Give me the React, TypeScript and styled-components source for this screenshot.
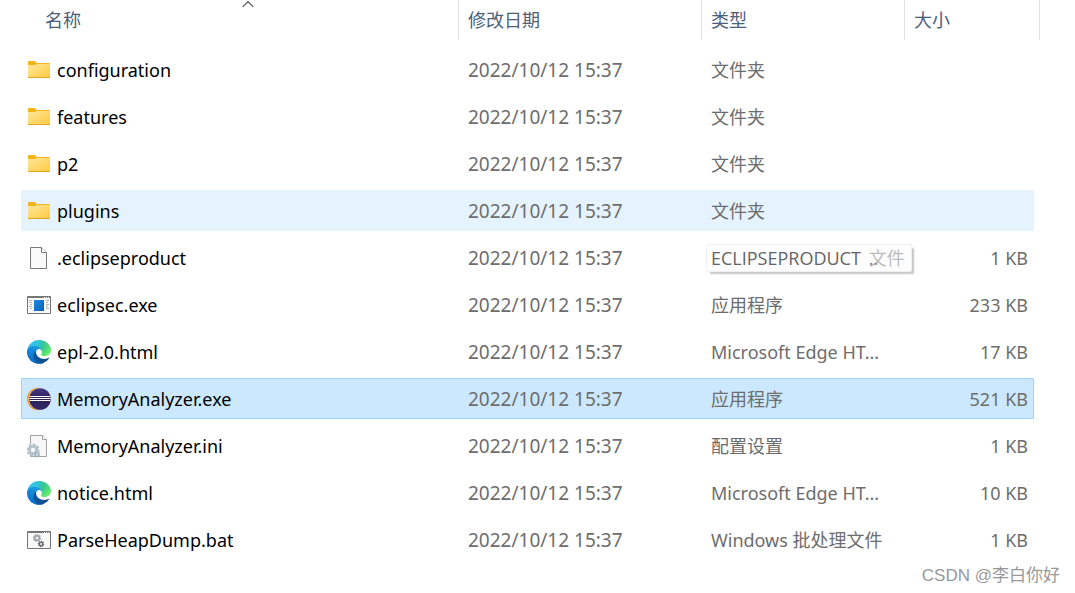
import React from "react";
import styled, { createGlobalStyle, css } from "styled-components";

const GlobalStyle = createGlobalStyle`
  *, *::before, *::after { box-sizing: border-box; }
  body {
    margin: 0;
    background: #fff;
    font-family: "Noto Sans", "Noto Sans CJK SC", sans-serif;
    font-size: 18px;
    line-height: 26px;
    color: #000;
  }
`;

const Page = styled.main`
  padding: 0 35px 0 21px;
`;

const FileTable = styled.table`
  display: block;
  width: 100%;
`;

const Head = styled.thead`
  display: block;
`;

const HeadRow = styled.tr`
  display: grid;
  grid-template-columns: minmax(0, 1fr) 243px 203px 135px;
  height: 40px;
  padding-left: 16px;
`;

const HeadCell = styled.th`
  position: relative;
  display: flex;
  padding: 0;
  border-right: 1px solid #e2e2e2;
`;

const SortButton = styled.button<{ $first?: boolean }>`
  flex: 1;
  padding: 0 0 0 ${(p) => (p.$first ? 8 : 9)}px;
  border: 0;
  background: none;
  font: inherit;
  font-weight: 400;
  text-align: left;
  color: #4c607a;
`;

const SortMark = styled.svg`
  position: absolute;
  top: 0;
  left: 50%;
  margin-left: -6px;
`;

const Body = styled.tbody`
  display: flex;
  flex-direction: column;
  gap: 6px;
  padding: 9px 6px 0 0;
`;

type RowState = "hover" | "selected";

const Row = styled.tr<{ $state?: RowState }>`
  display: grid;
  grid-template-columns: minmax(0, 1fr) 243px 203px 128px;
  align-items: center;
  height: 41px;
  border: 1px solid transparent;
  border-radius: 1px;
  ${(p) =>
    p.$state === "hover" &&
    css`
      background: #e5f3ff;
      border-color: #e5f3ff;
    `}
  ${(p) =>
    p.$state === "selected" &&
    css`
      background: #cce8ff;
      border-color: #99d1ff;
    `}
`;

const NameCell = styled.td`
  display: flex;
  align-items: center;
  gap: 6px;
  padding: 0 0 0 5px;
  white-space: nowrap;

  svg {
    flex: none;
  }
`;

const InfoCell = styled.td<{ $numeric?: boolean; $large?: boolean }>`
  position: relative;
  padding: 0 ${(p) => (p.$numeric ? 5 : 0)}px 0 9px;
  font-size: ${(p) => (p.$large ? 19 : 18)}px;
  text-align: ${(p) => (p.$numeric ? "right" : "left")};
  white-space: nowrap;
  color: #6d6d6d;
`;

const Tooltip = styled.span`
  position: absolute;
  top: -1px;
  left: 4px;
  display: flex;
  gap: 8px;
  padding: 0 6px 0 4px;
  border: 1px solid #f0f0f0;
  border-radius: 2px;
  background: #fdfdfd;
  box-shadow: 3px 3px 2px -1px #c4c4c4;
  font-family: "Open Sans", "Noto Sans CJK SC", sans-serif;
  color: #646464;
`;

const Faded = styled.span`
  position: relative;
  color: #bcbcbc;

  &::before {
    content: "..";
    position: absolute;
    left: 0;
    color: #8a8a8a;
  }
`;

const Watermark = styled.footer`
  margin-right: -20px;
  font-family: "Liberation Sans", "Noto Sans CJK SC", sans-serif;
  font-size: 17px;
  line-height: 32px;
  text-align: right;
  color: #999;
`;

type IconKind = "folder" | "file" | "exe" | "edge" | "eclipse" | "ini" | "bat";

function Gear({ x, y, r, color, hole }: { x: number; y: number; r: number; color: string; hole: string }) {
  return (
    <g transform={`translate(${x} ${y})`}>
      {[0, 45, 90, 135].map((a) => (
        <rect key={a} x={-r * 0.22} y={-r} width={r * 0.44} height={r * 2} fill={color} transform={`rotate(${a + 12})`} />
      ))}
      <circle r={r * 0.74} fill={color} />
      <circle r={r * 0.34} fill={hole} />
    </g>
  );
}

function Drawing({ kind, id }: { kind: IconKind; id: string }) {
  switch (kind) {
    case "folder":
      return (
        <>
          <defs>
            <linearGradient id={id} x1="0" y1="0" x2="1" y2="1">
              <stop offset="0" stopColor="#ffe79c" />
              <stop offset="1" stopColor="#fdca3f" />
            </linearGradient>
          </defs>
          <path d="M1 5q0-1 1-1h6l1.5 2H22q1 0 1 1v5H1z" fill="#f5b31a" />
          <path d="M1 8h7l1.5-1H23v14H1z" fill={`url(#${id})`} />
          <path d="M1 20h22v1H1z" fill="#e5a522" />
        </>
      );
    case "file":
      return (
        <>
          <path d="M3.5 2.5h11l5 5v16h-16z" fill="#f9f9f9" stroke="#797979" />
          <path d="M14.5 2.5v5h5" fill="#fff" stroke="#797979" />
        </>
      );
    case "ini":
      return (
        <>
          <path d="M3.5 2.5h12l4 4v17h-16z" fill="#f7f7f7" stroke="#a3a3a3" />
          <path d="M15.5 2.5v4h4" fill="#fff" stroke="#a3a3a3" />
          <Gear x={6} y={17} r={6.5} color="#b4c2cc" hole="#f4f7f9" />
          <Gear x={10} y={21.5} r={3} color="#a3b2bd" hole="#eef2f5" />
        </>
      );
    case "exe":
      return (
        <>
          <defs>
            <linearGradient id={id} x1="0" y1="0" x2="1" y2="1">
              <stop offset="0" stopColor="#1b8ae0" />
              <stop offset="1" stopColor="#0862b8" />
            </linearGradient>
          </defs>
          <path d="M.5 4.5h23v17H.5z" fill="#f9f9f9" stroke="#757575" />
          <path d="M1 5h22v1H1z" fill="#757575" />
          <path d="M17 5.5h1m1 0h1m1 0h1" stroke="#fff" />
          <path d="M7 8h10v11H7z" fill={`url(#${id})`} />
          <path d="M2 8.5h3m-3 2h3m-2 2h2m-3 2h3m-2 2h2M19 8.5h3m-3 2h2m-2 2h3m-3 2h2m-2 2h3" stroke="#b4b4b4" />
        </>
      );
    case "bat":
      return (
        <>
          <path d="M.5 4.5h23v17H.5z" fill="#f9f9f9" stroke="#757575" />
          <path d="M1 5h22v1H1z" fill="#757575" />
          <path d="M17 5.5h1m1 0h1m1 0h1" stroke="#fff" />
          <Gear x={10} y={11} r={4} color="#a0a4aa" hole="#f9f9f9" />
          <Gear x={14} y={17} r={3.2} color="#666a70" hole="#f9f9f9" />
        </>
      );
    case "eclipse":
      return (
        <>
          <defs>
            <linearGradient id={id} x1="0" y1="0" x2="0" y2="1">
              <stop offset="0" stopColor="#473788" />
              <stop offset=".5" stopColor="#2c2255" />
              <stop offset="1" stopColor="#342a6b" />
            </linearGradient>
          </defs>
          <circle cx="11.2" cy="13" r="11.2" fill="#f7941e" />
          <circle cx="12.6" cy="13" r="11" fill="#fbe3c4" />
          <circle cx="13" cy="13" r="10.8" fill={`url(#${id})`} />
          <path d="M2.8 10.5h20.4M2.2 12.5h21.6M2.8 14.5h20.4" stroke="#fff" strokeWidth="1.2" />
        </>
      );
    case "edge":
      return (
        <>
          <defs>
            <linearGradient id={`${id}a`} x1="0" y1=".5" x2="1" y2=".5">
              <stop offset="0" stopColor="#0c59a4" />
              <stop offset="1" stopColor="#114a8b" />
            </linearGradient>
            <linearGradient id={`${id}b`} x1=".8" y1=".2" x2=".3" y2="1">
              <stop offset="0" stopColor="#1b9de2" />
              <stop offset=".5" stopColor="#1383d8" />
              <stop offset="1" stopColor="#0a6cc4" />
            </linearGradient>
            <radialGradient id={`${id}c`} cx=".1" cy=".2" r="1">
              <stop offset="0" stopColor="#35c1f1" />
              <stop offset=".35" stopColor="#2fc4df" />
              <stop offset=".6" stopColor="#36c692" />
              <stop offset="1" stopColor="#66eb6e" />
            </radialGradient>
          </defs>
          <g transform="translate(0 1) scale(.09375)">
            <path
              fill={`url(#${id}a)`}
              d="M231 190.5c-3.4 1.8-6.9 3.4-10.5 4.7a101.5 101.5 0 0 1-35.9 6.5c-47.3 0-88.5-32.5-88.5-74.3a31.5 31.5 0 0 1 16.4-27.3c-42.8 1.8-53.8 46.4-53.8 72.5 0 74 68.1 81.4 82.8 81.4 7.9 0 19.8-2.3 27-4.6l1.3-.4A128 128 0 0 0 236.4 195a4 4 0 0 0-5.4-4.5z"
            />
            <path
              fill={`url(#${id}b)`}
              d="M105.7 242c-8.9-5.5-16.6-12.8-22.7-21.4a80.7 80.7 0 0 1 29.5-120.4c3.1-1.5 8.5-4.1 15.6-4a32.4 32.4 0 0 1 25.7 13 31.9 31.9 0 0 1 6.3 18.7c0-.2 24.5-79.6-80-79.6-43.9 0-80 41.6-80 78.2A130.2 130.2 0 0 0 12.2 183a128 128 0 0 0 156.4 67 75.5 75.5 0 0 1-62.8-8z"
            />
            <path
              fill={`url(#${id}c)`}
              d="M152.3 148.9c-.9 1-3.4 2.5-3.4 5.6 0 2.6 1.7 5.1 4.7 7.3 14.4 10 41.5 8.7 41.6 8.7 10.7 0 21.1-2.9 30.3-8.3A61.4 61.4 0 0 0 256 109.2c.3-22.4-8-37.3-11.3-43.9C223.5 23.9 177.7 0 128 0A128 128 0 0 0 0 126.2c.5-36.5 36.8-66 80-66 3.5 0 23.5.3 42 10 16.3 8.6 24.9 18.9 30.8 29.2 6.2 10.7 7.3 24.1 7.3 29.5s-2.7 13.3-7.8 19.9z"
            />
          </g>
        </>
      );
  }
}

interface Entry {
  name: string;
  icon: IconKind;
  type: string;
  size?: string;
  state?: RowState;
  tip?: boolean;
}

const entries: Entry[] = [
  { name: "configuration", icon: "folder", type: "文件夹" },
  { name: "features", icon: "folder", type: "文件夹" },
  { name: "p2", icon: "folder", type: "文件夹" },
  { name: "plugins", icon: "folder", type: "文件夹", state: "hover" },
  { name: ".eclipseproduct", icon: "file", type: "ECLIPSEPRODUCT", size: "1 KB", tip: true },
  { name: "eclipsec.exe", icon: "exe", type: "应用程序", size: "233 KB" },
  { name: "epl-2.0.html", icon: "edge", type: "Microsoft Edge HT...", size: "17 KB" },
  { name: "MemoryAnalyzer.exe", icon: "eclipse", type: "应用程序", size: "521 KB", state: "selected" },
  { name: "MemoryAnalyzer.ini", icon: "ini", type: "配置设置", size: "1 KB" },
  { name: "notice.html", icon: "edge", type: "Microsoft Edge HT...", size: "10 KB" },
  { name: "ParseHeapDump.bat", icon: "bat", type: "Windows 批处理文件", size: "1 KB" },
];

export default function App() {
  return (
    <>
      <GlobalStyle />
      <Page>
        <FileTable>
          <Head>
            <HeadRow>
              {["名称", "修改日期", "类型", "大小"].map((label, i) => (
                <HeadCell key={label} scope="col">
                  <SortButton type="button" $first={i === 0}>
                    {label}
                  </SortButton>
                  {i === 0 && (
                    <SortMark width="12" height="8" viewBox="0 0 12 8" aria-hidden="true">
                      <path d="M.8 6.8 6 1.6l5.2 5.2" fill="none" stroke="#555" strokeWidth="1.2" />
                    </SortMark>
                  )}
                </HeadCell>
              ))}
            </HeadRow>
          </Head>
          <Body>
            {entries.map((entry, i) => (
              <Row key={entry.name} $state={entry.state}>
                <NameCell>
                  <svg width="24" height="25" viewBox="0 0 24 25" aria-hidden="true">
                    <Drawing kind={entry.icon} id={`icon${i}`} />
                  </svg>
                  {entry.name}
                </NameCell>
                <InfoCell $large>2022/10/12 15:37</InfoCell>
                <InfoCell>
                  {entry.tip ? (
                    <>
                      &nbsp;
                      <Tooltip role="tooltip">
                        <span>{entry.type}</span>
                        <Faded>文件</Faded>
                      </Tooltip>
                    </>
                  ) : (
                    entry.type
                  )}
                </InfoCell>
                <InfoCell $numeric>{entry.size}</InfoCell>
              </Row>
            ))}
          </Body>
        </FileTable>
        <Watermark>CSDN @李白你好</Watermark>
      </Page>
    </>
  );
}
